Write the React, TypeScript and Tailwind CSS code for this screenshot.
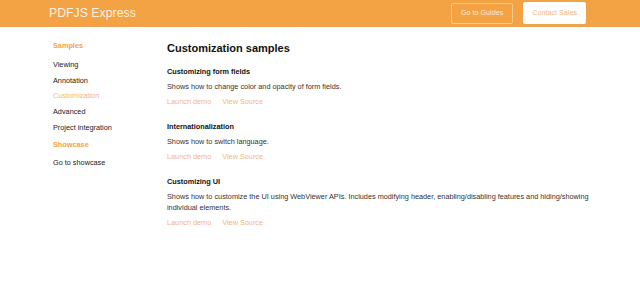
const NAV = [
  { label: 'Viewing' },
  { label: 'Annotation' },
  { label: 'Customization', active: true },
  { label: 'Advanced' },
  { label: 'Project integration' },
];

const SAMPLES = [
  {
    title: 'Customizing form fields',
    desc: 'Shows how to change color and opacity of form fields.',
  },
  {
    title: 'Internationalization',
    desc: 'Shows how to switch language.',
  },
  {
    title: 'Customizing UI',
    desc: 'Shows how to customize the UI using WebViewer APIs. Includes modifying header, enabling/disabling features and hiding/showing individual elements.',
  },
];

export default function App() {
  return (
    <div className="min-h-[281px] bg-white font-['Liberation_Sans',Arial,sans-serif] text-[#222]">
      {/* Header */}
      <header className="h-[27px] bg-[#f3a244] flex items-center pl-[49px] pr-[54px] border-b border-[#eaa458]">
        <span className="text-[12.3px] text-[#fdf1e2]">PDFJS Express</span>
        <div className="ml-auto flex items-center gap-[10px]">
          <button className="h-[21px] px-[9px] border border-[#f8c98f] rounded-[2px] text-[7.2px] text-[#fde9d2]">
            Go to Guides
          </button>
          <button className="h-[22px] px-[9px] bg-white rounded-[2px] text-[7.2px] text-[#f3b77a]">
            Contact Sales
          </button>
        </div>
      </header>

      <div className="flex pt-[14px]">
        {/* Sidebar */}
        <aside className="w-[167px] pl-[53px] text-[7.3px] shrink-0">
          <div className="text-[#f3a244] font-bold leading-[10px] mb-[6px]">Samples</div>
          <ul className="flex flex-col">
            {NAV.map((item) => (
              <li
                key={item.label}
                className={`leading-[15.7px] ${item.active ? 'text-[#f3b77a]' : 'text-[#222]'}`}
              >
                {item.label}
              </li>
            ))}
          </ul>
          <div className="text-[#f3a244] font-bold leading-[10px] mt-[4px] mb-[8px]">Showcase</div>
          <div className="leading-[10px]">Go to showcase</div>
        </aside>

        {/* Main */}
        <main className="flex-1 pr-[50px]">
          <h1 className="text-[11px] font-bold leading-[14px] text-[#111] mb-[12px]">Customization samples</h1>
          <div className="flex flex-col gap-[15px]">
            {SAMPLES.map((s) => (
              <section key={s.title} className="text-[7.3px]">
                <h2 className="font-bold leading-[10px] text-[#111] mb-[4px]">{s.title}</h2>
                <p className="leading-[11px] text-[#333] mb-[4px]">{s.desc}</p>
                <div className="flex gap-[11px] text-[#f3b77a] leading-[11px]">
                  <a>Launch demo</a>
                  <a>View Source</a>
                </div>
              </section>
            ))}
          </div>
        </main>
      </div>
    </div>
  );
}
